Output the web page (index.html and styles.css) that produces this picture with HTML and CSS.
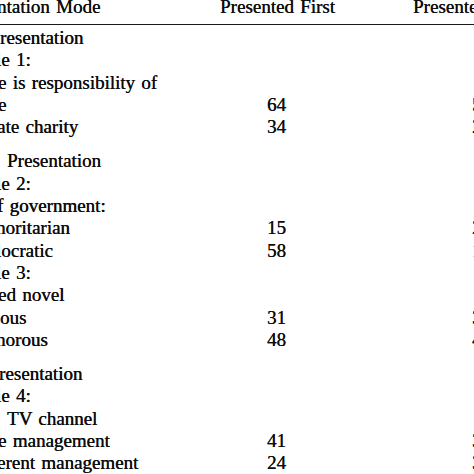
FILE: index.html
```html
<!DOCTYPE html>
<html>
<head>
<meta charset="utf-8">
<link rel="stylesheet" href="styles.css">
</head>
<body>
<div class="table">
  <div class="row head">
    <div class="label in3">ntation Mode</div>
    <div class="first">Presented First</div>
    <div class="second">Presented Second</div>
  </div>

  <div class="group g1">
    <div class="row"><div class="label">resentation</div><div class="first"></div><div class="second"></div></div>
    <div class="row"><div class="label in4">le 1:</div><div class="first"></div><div class="second"></div></div>
    <div class="row"><div class="label in2">e is responsibility of</div><div class="first"></div><div class="second"></div></div>
    <div class="row"><div class="label in2">e</div><div class="first">64</div><div class="second">52</div></div>
    <div class="row"><div class="label in3">ate charity</div><div class="first">34</div><div class="second">29</div></div>
  </div>

  <div class="group">
    <div class="row"><div class="label ip7">Presentation</div><div class="first"></div><div class="second"></div></div>
    <div class="row"><div class="label in4">le 2:</div><div class="first"></div><div class="second"></div></div>
    <div class="row"><div class="label in3">f government:</div><div class="first"></div><div class="second"></div></div>
    <div class="row"><div class="label in4">horitarian</div><div class="first">15</div><div class="second">21</div></div>
    <div class="row"><div class="label in4">locratic</div><div class="first">58</div><div class="second">17</div></div>
    <div class="row"><div class="label in4">le 3:</div><div class="first"></div><div class="second"></div></div>
    <div class="row"><div class="label in2">ed novel</div><div class="first"></div><div class="second"></div></div>
    <div class="row"><div class="label">ous</div><div class="first">31</div><div class="second">37</div></div>
    <div class="row"><div class="label in4">norous</div><div class="first">48</div><div class="second">42</div></div>
  </div>

  <div class="group">
    <div class="row"><div class="label in1">resentation</div><div class="first"></div><div class="second"></div></div>
    <div class="row"><div class="label in4">le 4:</div><div class="first"></div><div class="second"></div></div>
    <div class="row"><div class="label ip7">TV channel</div><div class="first"></div><div class="second"></div></div>
    <div class="row"><div class="label in2">e management</div><div class="first">41</div><div class="second">36</div></div>
    <div class="row"><div class="label in3">erent management</div><div class="first">24</div><div class="second">30</div></div>
  </div>
</div>
</body>
</html>
```

FILE: styles.css
```css
html, body {
  margin: 0;
  padding: 0;
  background: #ffffff;
  overflow: hidden;
}
body {
  width: 474px;
  height: 474px;
  font-family: "Liberation Serif", "Times New Roman", serif;
  font-size: 19px;
  color: #0d0d0d;
  word-spacing: 1.5px;
  text-shadow: 0.3px 0 0 #0d0d0d;
}
.table {
  width: 474px;
}
.row {
  display: grid;
  grid-template-columns: 220px 113px 141px;
  height: 22.3px;
  line-height: 22.3px;
  white-space: nowrap;
}
.label {
  overflow: visible;
}
.in1 { text-indent: -1px; }
.in2 { text-indent: -2px; }
.in3 { text-indent: -3px; }
.in4 { text-indent: -4px; }
.ip7 { text-indent: 7px; }
.first {
  text-align: center;
}
.second {
  padding-left: 139px;
  overflow: visible;
}
.head {
  height: 14px;
  line-height: 14px;
  padding-bottom: 10px;
  border-bottom: 1.5px solid #1a1a1a;
}
.head .second {
  padding-left: 80px;
}
.group {
  margin-top: 12px;
}
.group.g1 {
  margin-top: 2px;
}
```
